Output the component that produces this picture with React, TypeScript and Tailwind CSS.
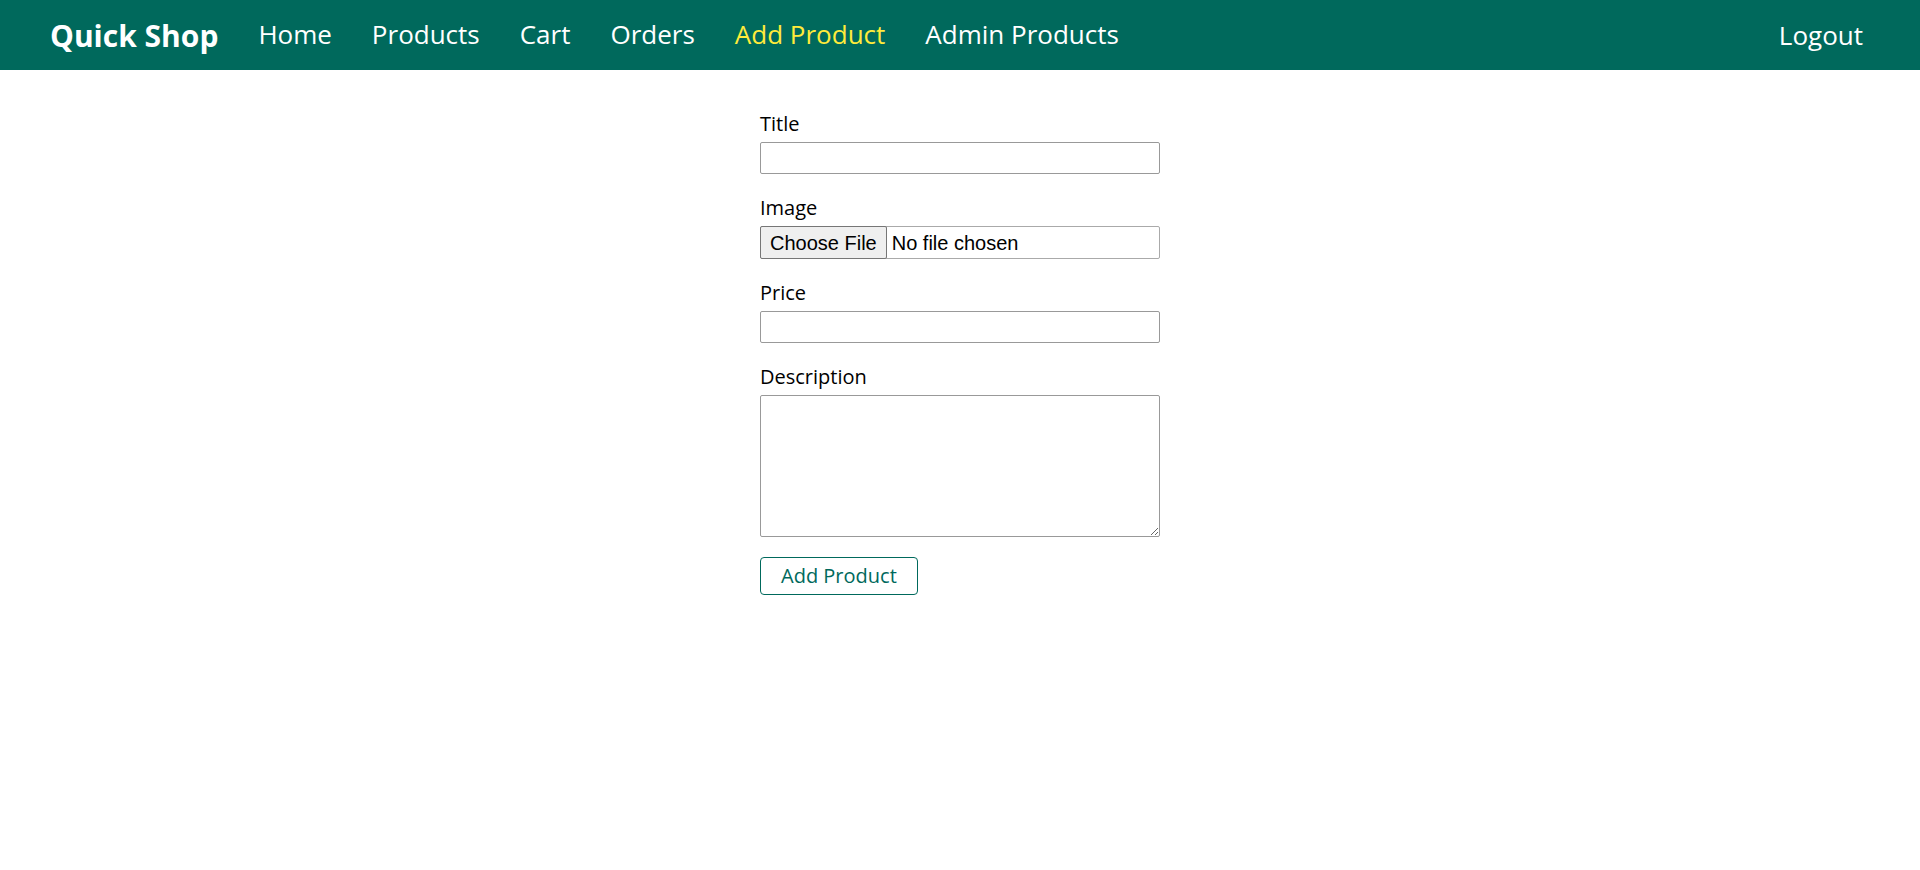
const links = ['Home', 'Products', 'Cart', 'Orders', 'Add Product', 'Admin Products']

function Header() {
  return (
    <header className="h-[70px] bg-[#00695c] font-['Open_Sans',sans-serif] text-white">
      <nav className="flex h-full items-center pl-[50px] pr-[57px]">
        <h1 className="text-[30px] font-bold leading-normal">Quick Shop</h1>
        <ul className="ml-10 flex flex-1 items-center gap-10 pb-[2px] text-[26px]">
          {links.map((l) => (
            <li key={l} className={l === 'Add Product' ? 'text-[#ffeb3b]' : ''}>
              <a href="#">{l}</a>
            </li>
          ))}
        </ul>
        <button className="text-[26px] leading-normal">Logout</button>
      </nav>
    </header>
  )
}

function Field({ label, children }: { label: string; children: React.ReactNode }) {
  return (
    <div className="mb-5">
      <label className="mb-[5px] block leading-[27px]">{label}</label>
      {children}
    </div>
  )
}

export default function App() {
  return (
    <div className="min-h-[870px] bg-white">
      <Header />
      <main className="mx-auto mt-10 w-[400px] font-['Open_Sans',sans-serif] text-[20px] text-black">
        <form onSubmit={(e) => e.preventDefault()}>
          <Field label="Title">
            <input
              type="text"
              className="block h-[32px] w-full rounded-[2px] border border-[#999] px-1"
            />
          </Field>
          <Field label="Image">
            <label className="flex h-[33px] w-full items-stretch rounded-[2px] border border-[#aaa] font-['Liberation_Sans',Arial,sans-serif]">
              <input type="file" className="hidden" />
              <span className="-ml-px -my-px flex items-center rounded-[2px] border border-[#767676] bg-[#efefef] px-[9px]">
                Choose File
              </span>
              <span className="flex items-center pl-[5px]">No file chosen</span>
            </label>
          </Field>
          <Field label="Price">
            <input
              type="text"
              className="block h-[32px] w-full rounded-[2px] border border-[#999] px-1"
            />
          </Field>
          <Field label="Description">
            <textarea className="block h-[142px] w-full rounded-[2px] border border-[#999] px-1" />
          </Field>
          <button
            type="submit"
            className="flex h-[38px] items-center rounded-[4px] border border-[#00695c] px-5 text-[#00695c]"
          >
            Add Product
          </button>
        </form>
      </main>
    </div>
  )
}
